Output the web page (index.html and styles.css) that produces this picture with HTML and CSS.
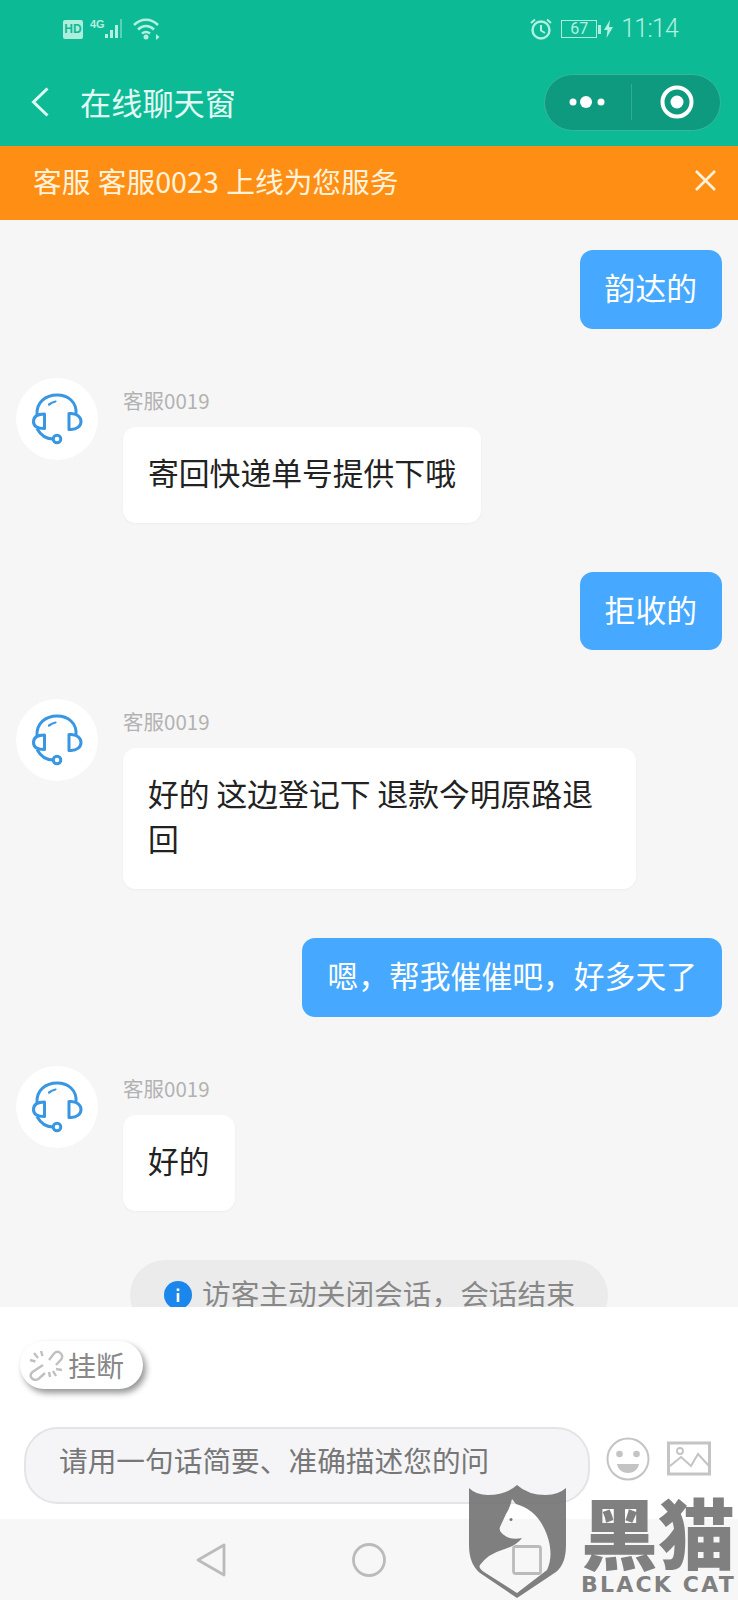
FILE: index.html
```html
<!DOCTYPE html>
<html lang="zh-CN">
<head>
    <meta charset="UTF-8">
    <meta name="viewport" content="width=device-width, initial-scale=1.0">
    <title>在线聊天窗</title>
    <link rel="stylesheet" href="styles.css">
</head>
<body>
    <svg class="defs" width="0" height="0">
        <symbol id="headset" viewBox="0 0 82 82">
            <path d="M21 37 C20 24 30 17 41 17 C52 17 61 24 60 36" fill="none" stroke="currentColor" stroke-width="3"/>
            <path d="M33 26.500 C35 25 37 24 39.500 23.500" fill="none" stroke="currentColor" stroke-width="2.200" stroke-linecap="round"/>
            <path d="M28.500 36 V50.500 C21 50.500 17.500 47.500 17.500 43.500 C17.500 39 21 36 28.500 36 Z" fill="none" stroke="currentColor" stroke-width="3" stroke-linejoin="round"/>
            <path d="M53 35.500 H55 C61 35.500 65 39 65 43.500 C65 48 61 51.500 55 51.500 H53 Z" fill="none" stroke="currentColor" stroke-width="3" stroke-linejoin="round"/>
            <path d="M21 50.500 C24 56 29 61 37 61" fill="none" stroke="currentColor" stroke-width="3"/>
            <circle cx="41" cy="61" r="3.800" fill="none" stroke="currentColor" stroke-width="3"/>
        </symbol>
    </svg>

    <div class="page">
        <header class="topbar">
            <div class="status">
                <div class="status-left">
                    <span class="hd">HD</span>
                    <span class="net">4G</span>
                    <svg class="signal" width="19" height="20" viewBox="0 0 19 20">
                        <rect x="0" y="15" width="3" height="4"/>
                        <rect x="5" y="11" width="3" height="8"/>
                        <rect x="10" y="6" width="3" height="13"/>
                        <rect x="15" y="0" width="2" height="19" opacity="0.45"/>
                    </svg>
                    <svg class="wifi" width="27" height="22" viewBox="0 0 27 22">
                        <path d="M1 7 C8 0 18 0 25 7" fill="none" stroke="currentColor" stroke-width="2.600"/>
                        <path d="M5 11.500 C10 7 16 7 21 11.500" fill="none" stroke="currentColor" stroke-width="2.600"/>
                        <path d="M9 15.500 C11.500 13.500 14.500 13.500 17 15.500" fill="none" stroke="currentColor" stroke-width="2.400"/>
                        <circle cx="13" cy="19" r="2.500" fill="currentColor"/>
                        <path d="M23 16 L26.500 19 L23 22 Z" fill="currentColor"/>
                    </svg>
                </div>
                <div class="status-right">
                    <svg class="alarm" width="22" height="22" viewBox="0 0 22 22">
                        <circle cx="11" cy="12" r="8.500" fill="none" stroke="currentColor" stroke-width="2.400"/>
                        <path d="M11 7 V12.500 L15 15 M1 5 L5 1.500 M21 5 L17 1.500" fill="none" stroke="currentColor" stroke-width="2"/>
                    </svg>
                    <span class="battery">67</span>
                    <span class="battery-nub"></span>
                    <svg class="bolt" width="9" height="18" viewBox="0 0 9 18">
                        <path d="M6 0 L0 10 H3.500 L2.500 18 L9 7 H5 Z" fill="currentColor"/>
                    </svg>
                    <span class="time">11:14</span>
                </div>
            </div>
            <nav class="navbar">
                <svg class="back" width="18" height="30" viewBox="0 0 18 30">
                    <path d="M16.500 1.500 L2.500 15 L16.500 28.500" fill="none" stroke="currentColor" stroke-width="3"/>
                </svg>
                <span class="title">在线聊天窗</span>
                <div class="capsule">
                    <div class="capsule-part">
                        <svg width="40" height="14" viewBox="0 0 40 14" fill="#fff">
                            <circle cx="5" cy="7" r="3.500"/>
                            <circle cx="18" cy="7" r="6"/>
                            <circle cx="33" cy="7" r="3.500"/>
                        </svg>
                    </div>
                    <div class="capsule-part capsule-right">
                        <svg width="34" height="34" viewBox="0 0 34 34">
                            <circle cx="17" cy="17" r="14.500" fill="none" stroke="#fff" stroke-width="4"/>
                            <circle cx="17" cy="17" r="6.500" fill="#fff"/>
                        </svg>
                    </div>
                </div>
            </nav>
        </header>

        <div class="banner">
            <span class="banner-text">客服 客服0023 上线为您服务</span>
            <svg class="banner-close" width="21" height="21" viewBox="0 0 21 21">
                <path d="M1 1 L20 20 M20 1 L1 20" fill="none" stroke="#fff3dc" stroke-width="2.600"/>
            </svg>
        </div>

        <main class="chat">
            <div class="msg-me">韵达的</div>

            <div class="msg-agent">
                <div class="avatar"><svg width="82" height="82"><use href="#headset"/></svg></div>
                <div class="agent-body">
                    <div class="agent-name">客服0019</div>
                    <div class="bubble">寄回快递单号提供下哦</div>
                </div>
            </div>

            <div class="msg-me">拒收的</div>

            <div class="msg-agent">
                <div class="avatar"><svg width="82" height="82"><use href="#headset"/></svg></div>
                <div class="agent-body">
                    <div class="agent-name">客服0019</div>
                    <div class="bubble">好的 这边登记下 退款今明原路退回</div>
                </div>
            </div>

            <div class="msg-me">嗯，帮我催催吧，好多天了</div>

            <div class="msg-agent">
                <div class="avatar"><svg width="82" height="82"><use href="#headset"/></svg></div>
                <div class="agent-body">
                    <div class="agent-name">客服0019</div>
                    <div class="bubble">好的</div>
                </div>
            </div>

            <div class="notice">
                <svg width="28" height="28" viewBox="0 0 28 28">
                    <circle cx="14" cy="14" r="14" fill="#1b87ec"/>
                    <rect x="12.700" y="12" width="2.600" height="9" fill="#fff"/>
                    <rect x="12.700" y="7.500" width="2.600" height="2.600" fill="#fff"/>
                </svg>
                <span class="notice-text">访客主动关闭会话，会话结束</span>
            </div>
        </main>

        <footer class="footer">
            <div class="hangup">
                <svg width="37" height="32" viewBox="0 0 37 32" fill="none" stroke="#c0c0c0" stroke-width="2.400">
                    <path d="M21 11 L26 4.500 C30 0.500 36 5 33.500 10 L28 16"/>
                    <path d="M15 16 L4.500 23 C0 27 5 33 10.500 30 L17 24"/>
                    <path d="M13 2 L14.500 7 M6 4 L10 9 M2 11 L7.500 12.500 M22 28 L21 23 M28 27 L25 22 M34 21 L28 20"/>
                </svg>
                <span>挂断</span>
            </div>
            <div class="input-row">
                <div class="input-box">请用一句话简要、准确描述您的问</div>
                <div class="tools">
                    <svg width="44" height="44" viewBox="0 0 44 44">
                        <circle cx="22" cy="22" r="20.500" fill="none" stroke="#c4c4c4" stroke-width="2"/>
                        <circle cx="13.500" cy="17" r="3.300" fill="#c4c4c4"/>
                        <circle cx="30.500" cy="17" r="3.300" fill="#c4c4c4"/>
                        <path d="M11 27 H33 C32 33 27 36 22 36 C17 36 12 33 11 27 Z" fill="#c4c4c4"/>
                    </svg>
                    <svg width="44" height="36" viewBox="0 0 44 36">
                        <rect x="1.500" y="2" width="41" height="31" fill="none" stroke="#c4c4c4" stroke-width="3"/>
                        <circle cx="13" cy="10" r="3" fill="none" stroke="#c4c4c4" stroke-width="1.800"/>
                        <path d="M3 25 L14 16 L24 25 L31 13 L42 25" fill="none" stroke="#c4c4c4" stroke-width="2"/>
                    </svg>
                </div>
            </div>
        </footer>

        <div class="softkeys">
            <svg width="30" height="34" viewBox="0 0 30 34">
                <path d="M28 2 V32 L2 17 Z" fill="none" stroke="#bbb" stroke-width="2.800" stroke-linejoin="round"/>
            </svg>
            <svg width="34" height="34" viewBox="0 0 34 34">
                <circle cx="17" cy="17" r="15.500" fill="none" stroke="#bbb" stroke-width="2.800"/>
            </svg>
            <svg width="30" height="30" viewBox="0 0 30 30">
                <rect x="1.500" y="1.500" width="27" height="27" rx="2" fill="none" stroke="#bbb" stroke-width="2.800"/>
            </svg>
        </div>

        <div class="watermark">
            <svg width="100" height="116" viewBox="9 4 100 116">
                <path fill-rule="evenodd" d="M9 8 Q16 15 28 15 Q46 15 57 5 Q68 15 86 15 Q98 15 106 8 V65 Q106 84 96 92 L57 118 L20 93 Q9 84 9 65 Z M52 19 L56 24 Q78 30 87 55 Q94 75 87 90 L57 113 L24 92 Q18 88 20 85 Q28 74 42 70 Q56 66 62 58 Q54 60 47 57 Q38 52 40 47 L46 34 Q50 28 52 19 Z" fill="#6e6e6e" fill-opacity="0.88"/>
                <circle cx="51" cy="39.500" r="1.500" fill="#777"/>
            </svg>
            <div class="wm-text">
                <div class="wm-cn">黑猫</div>
                <div class="wm-en">BLACK CAT</div>
            </div>
        </div>
    </div>
</body>
</html>
```

FILE: styles.css
```css
* {
    box-sizing: border-box;
}
body {
    margin: 0;
    font-family: 'Noto Sans CJK SC', 'Noto Sans', sans-serif;
    background-color: #f6f6f6;
}
.defs {
    display: block;
    height: 0;
}
.page {
    position: relative;
    display: flex;
    flex-direction: column;
    width: 738px;
    height: 1600px;
    overflow: hidden;
}

/* top */
.topbar {
    flex: none;
    height: 146px;
    background-color: #0cbb96;
}
.status {
    display: flex;
    justify-content: space-between;
    align-items: center;
    height: 58px;
    padding: 0 60px 0 63px;
    color: #b4f0e0;
}
.status-left,
.status-right {
    display: flex;
    align-items: center;
}
.hd {
    width: 20px;
    height: 19px;
    border-radius: 2px;
    background-color: #aeeedd;
    color: #0cbb96;
    font-family: 'Liberation Sans', sans-serif;
    font-size: 12px;
    font-weight: 700;
    line-height: 19px;
    text-align: center;
}
.net {
    margin: 0 0 11px 7px;
    font-family: 'Liberation Sans', sans-serif;
    font-size: 11px;
    font-weight: 700;
    line-height: 10px;
}
.signal {
    fill: currentColor;
}
.wifi {
    margin-left: 9px;
}
.battery {
    width: 36px;
    height: 18px;
    margin-left: 9px;
    border: 1px solid #aeeedd;
    font-family: 'Roboto', sans-serif;
    font-size: 16px;
    line-height: 16px;
    text-align: center;
}
.battery-nub {
    width: 3px;
    height: 9px;
    margin-left: 1px;
    background-color: #aeeedd;
}
.bolt {
    margin-left: 3px;
}
.time {
    margin-left: 8px;
    font-family: 'Roboto', sans-serif;
    font-size: 25px;
    font-weight: 300;
    letter-spacing: -0.8px;
    line-height: 28px;
}
.navbar {
    display: flex;
    align-items: center;
    height: 88px;
    padding: 0 17px 0 31px;
    color: #e2f8f2;
}
.title {
    margin-left: 31px;
    font-size: 31.200px;
    line-height: 44px;
}
.capsule {
    display: flex;
    align-items: center;
    width: 177px;
    height: 57px;
    margin-left: auto;
    border: 1px solid #35b79c;
    border-radius: 29px;
    background-color: #0e9a7e;
}
.capsule-part {
    display: flex;
    justify-content: center;
    align-items: center;
    flex: 1;
    height: 36px;
}
.capsule-right {
    padding-left: 2px;
    border-left: 1px solid #2fae93;
}

/* orange bar */
.banner {
    flex: none;
    display: flex;
    justify-content: space-between;
    align-items: center;
    height: 74px;
    padding: 0 22px 0 33px;
    background-color: #ff8e14;
    color: #fff3dc;
    font-size: 28.700px;
    word-spacing: 1px;
}
.banner-text {
    padding-bottom: 6px;
}
.banner-close {
    margin-bottom: 6px;
}

/* messages */
.chat {
    flex: 1;
    display: flex;
    flex-direction: column;
    gap: 49px;
    min-height: 0;
    padding: 30px 16px 0;
    overflow: hidden;
    font-size: 30.800px;
    line-height: 45px;
}
.msg-me {
    flex: none;
    align-self: flex-end;
    padding: 14px 25px 19.500px;
    border-radius: 13px;
    background-color: #46a9ff;
    color: #fff;
}
.msg-agent {
    flex: none;
    display: flex;
    gap: 25px;
}
.avatar {
    flex: none;
    width: 82px;
    height: 82px;
    border-radius: 50%;
    background-color: #fff;
    color: #3896e2;
}
.agent-name {
    height: 46px;
    margin-bottom: 3px;
    color: #b2b2b2;
    font-size: 20.500px;
    line-height: 44px;
}
.bubble {
    width: fit-content;
    max-width: 513px;
    padding: 22px 25px 29px;
    border-radius: 13px;
    background-color: #fff;
    color: #222;
    box-shadow: 0 1px 3px rgba(0, 0, 0, 0.04);
}
.notice {
    flex: none;
    display: flex;
    align-items: center;
    align-self: center;
    gap: 10px;
    width: 478px;
    height: 70px;
    padding-left: 34px;
    border-radius: 35px;
    background-color: #ebebeb;
    color: #888;
    font-size: 28.700px;
}
.notice-text {
    padding-bottom: 5px;
}

/* bottom */
.footer {
    flex: none;
    height: 212px;
    padding: 34px 0 0 20px;
    background-color: #fff;
}
.hangup {
    display: flex;
    align-items: center;
    gap: 3px;
    width: 123px;
    height: 48px;
    padding-left: 8px;
    border-radius: 24px;
    background-color: #fff;
    box-shadow: 3px 4px 6px rgba(0, 0, 0, 0.42);
    color: #888;
    font-size: 28px;
}
.input-row {
    display: flex;
    gap: 16px;
    margin: 38px 0 0 4px;
}
.input-box {
    width: 566px;
    height: 77px;
    padding-left: 33px;
    border: 2px solid #e4e4e6;
    border-radius: 34px;
    background-color: #f5f5f8;
    color: #777;
    font-size: 28.700px;
    line-height: 62px;
}
.tools {
    display: flex;
    align-items: center;
    gap: 17px;
    height: 44px;
    margin-top: 10px;
}
.softkeys {
    flex: none;
    display: flex;
    justify-content: center;
    align-items: center;
    gap: 126px;
    height: 81px;
    background-color: #f7f7f7;
}

/* logo over the page corner */
.watermark {
    position: absolute;
    left: 469px;
    top: 1484px;
    display: flex;
    gap: 12px;
    color: #808080;
}
.wm-text {
    margin-top: 8px;
}
.wm-cn {
    height: 83px;
    font-size: 77px;
    font-weight: 900;
    line-height: 78px;
    white-space: nowrap;
}
.wm-en {
    font-family: 'DejaVu Sans', sans-serif;
    font-size: 22px;
    font-weight: 700;
    letter-spacing: 2.200px;
    line-height: 20px;
    white-space: nowrap;
}
```
